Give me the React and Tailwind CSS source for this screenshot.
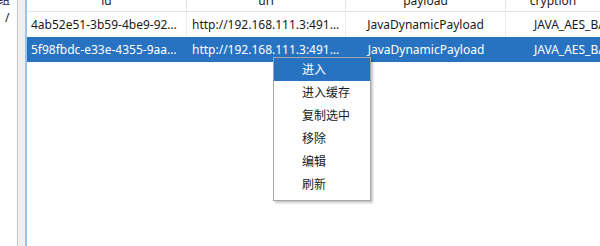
const rows = [
  {
    id: "4ab52e51-3b59-4be9-92…",
    url: "http://192.168.111.3:491…",
    payload: "JavaDynamicPayload",
    cryption: "JAVA_AES_BASE64",
  },
  {
    id: "5f98fbdc-e33e-4355-9aa…",
    url: "http://192.168.111.3:491…",
    payload: "JavaDynamicPayload",
    cryption: "JAVA_AES_BASE64",
  },
];

const menuItems = ["进入", "进入缓存", "复制选中", "移除", "编辑", "刷新"];

const font = { fontFamily: '"Noto Sans", "Noto Sans CJK SC", sans-serif' };

export default function App() {
  return (
    <div
      className="relative w-[600px] h-[246px] bg-white flex overflow-hidden text-[12px] text-[#1a1a1a]"
      style={font}
    >
      {/* tree on the left */}
      <div className="w-[17px] overflow-hidden shrink-0">
        <div className="-mt-[10px] -ml-[2px] leading-[20px]">
          <div className="whitespace-nowrap">组</div>
          <div className="pl-[7px] -mt-[2px]">/</div>
        </div>
      </div>
      <div className="w-[8px] shrink-0 border-l border-[#c4c4c4] bg-[#f0f0f0]" />
      <div className="w-[2px] shrink-0 bg-[#9cc3ec]" />

      {/* table */}
      <div className="flex-1 overflow-hidden">
        <div className="grid grid-cols-[160px_159px_160px_1fr] h-[22px] -mt-[10px] border-b border-[#e4e4e4]">
          {["id", "url", "payload", "cryption"].map((h, i) => (
            <div
              key={h}
              className={
                "flex items-center justify-center whitespace-nowrap " +
                (i < 3 ? "border-r border-[#e4e4e4]" : "")
              }
            >
              {h}
            </div>
          ))}
        </div>
        {rows.map((r, i) => (
          <div
            key={r.id}
            className={
              "grid grid-cols-[160px_159px_160px_1fr] h-[25px] " +
              (i === 1 ? "bg-[#2872c2] text-white" : "")
            }
          >
            <div className={"flex items-center pl-[4px] whitespace-nowrap overflow-hidden " + (i === 0 ? "border-r border-[#ececec]" : "")}>
              {r.id}
            </div>
            <div className={"flex items-center pl-[5px] whitespace-nowrap overflow-hidden " + (i === 0 ? "border-r border-[#ececec]" : "")}>
              {r.url}
            </div>
            <div className={"flex items-center justify-center whitespace-nowrap overflow-hidden " + (i === 0 ? "border-r border-[#ececec]" : "")}>
              {r.payload}
            </div>
            <div className="flex items-center pl-[28px] whitespace-nowrap overflow-hidden">
              {r.cryption}
            </div>
          </div>
        ))}
      </div>

      {/* context menu */}
      <div className="absolute left-[273px] top-[57px] w-[98px] bg-white border border-[#a6a6a6] pb-[4px] shadow-[2px_2px_2px_rgba(0,0,0,0.22)]">
        {menuItems.map((m, i) => (
          <div
            key={m}
            className={
              "h-[23px] flex items-center pl-[28px] " +
              (i === 0 ? "bg-[#2872c2] text-white" : "")
            }
          >
            {m}
          </div>
        ))}
      </div>
    </div>
  );
}
